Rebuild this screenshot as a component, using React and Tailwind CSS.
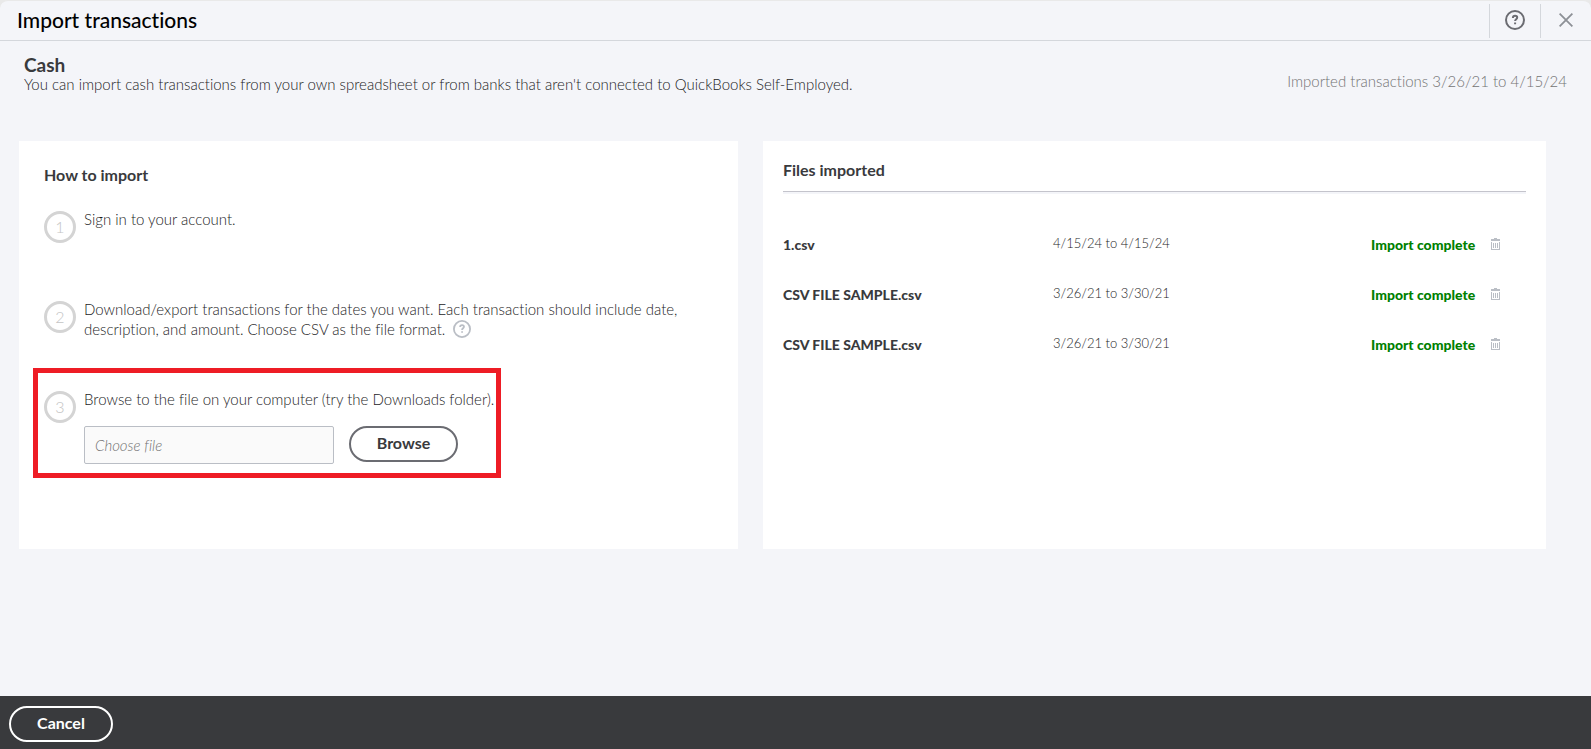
import React, { useRef, useState } from "react";

const importedFiles = [
  { id: 1, name: "1.csv", range: "4/15/24 to 4/15/24" },
  { id: 2, name: "CSV FILE SAMPLE.csv", range: "3/26/21 to 3/30/21" },
  { id: 3, name: "CSV FILE SAMPLE.csv", range: "3/26/21 to 3/30/21" },
];

const HelpIcon = ({ className }) => (
  <svg
    viewBox="0 0 20 20"
    className={className}
    fill="none"
    stroke="currentColor"
    strokeWidth="2"
    aria-hidden="true"
  >
    <circle cx="10" cy="10" r="9" />
    <path d="M7.9 7.9c0-1.3.9-2.1 2.2-2.1s2.1.7 2.1 1.8c0 1.6-2.1 1.6-2.1 3.4" />
    <path d="M10.1 12.4v1.9" />
  </svg>
);

const CloseIcon = () => (
  <svg
    viewBox="0 0 14 14"
    className="h-3.5 w-3.5"
    fill="none"
    stroke="currentColor"
    strokeWidth="1.8"
    aria-hidden="true"
  >
    <path d="M.6.6l12.8 12.8M13.4.6L.6 13.4" />
  </svg>
);

const TrashIcon = () => (
  <svg viewBox="0 0 9 12" className="h-3 w-[9px]" fill="currentColor" aria-hidden="true">
    <path d="M3 0h3v1h3v2H0V1h3z" />
    <path d="M0 4h1v7h7V4h1v8H0zM2 5h1v5H2zM4 5h1v5H4zM6 5h1v5H6z" />
  </svg>
);

const Step = ({ number, children }) => (
  <li className="relative flex min-h-[90px] items-start gap-2">
    <span className="mt-0.5 flex h-8 w-8 shrink-0 items-center justify-center rounded-full border-3 border-[#d4d4d4] text-base font-light text-[#c4c4c4]">
      {number}
    </span>
    <div className="flex-1 text-[15px] leading-5 font-light text-[#1c1c1e]">{children}</div>
  </li>
);

const App = () => {
  const fileRef = useRef(null);
  const [fileName, setFileName] = useState("");

  return (
    <div className="bg-[#e9e9e9] font-['Lato',sans-serif] text-[#393a3d] [font-variant-ligatures:none]">
      <div className="flex min-h-screen flex-col overflow-hidden rounded-t-lg border-t border-[#e9e9e9] bg-[#f4f5f9]">
        <header className="flex h-10 items-start justify-between border-b border-[#d4d7dc] pt-[3px] pl-[17px]">
          <h1 className="text-[21px] leading-8 font-medium text-black">Import transactions</h1>
          <div className="flex h-[34px]">
            <button
              aria-label="Help"
              className="flex w-[51px] items-center justify-center border-l border-[#d4d7dc] pb-0.5 text-[#6b6c72]"
            >
              <HelpIcon className="h-5 w-5" />
            </button>
            <button
              aria-label="Close"
              className="flex w-[51px] items-center justify-center border-l border-[#d4d7dc] pb-0.5 text-[#8d9096]"
            >
              <CloseIcon />
            </button>
          </div>
        </header>

        <main className="flex-1">
          <div className="flex items-end justify-between gap-6 px-6 pt-[14px]">
            <div>
              <h2 className="text-[19px] leading-5 font-bold">Cash</h2>
              <p className="text-[15px] leading-[18px] font-light text-[#1c1c1e]">
                You can import cash transactions from your own spreadsheet or from banks that
                aren't connected to QuickBooks Self-Employed.
              </p>
            </div>
            <p className="text-[15px] leading-6 font-light text-[#737373]">
              Imported transactions 3/26/21 to 4/15/24
            </p>
          </div>

          <div className="grid grid-cols-[719fr_783fr] gap-[25px] pt-12 pr-[45px] pb-8 pl-[19px]">
            <section className="min-h-[408px] bg-white px-[25px] pt-[22px]">
              <h3 className="text-base leading-6 font-bold">How to import</h3>
              <ol className="pt-[22px]">
                <Step number={1}>Sign in to your account.</Step>
                <Step number={2}>
                  <p className="max-w-[600px]">
                    Download/export transactions for the dates you want. Each transaction should
                    include date, description, and amount. Choose CSV as the file format.
                    <button
                      aria-label="About the CSV format"
                      className="ml-2 inline-block align-text-bottom text-[#babec5]"
                    >
                      <HelpIcon className="h-[18px] w-[18px]" />
                    </button>
                  </p>
                </Step>
                <Step number={3}>
                  <div className="pointer-events-none absolute -top-[21px] -left-[11px] h-[110px] w-[468px] border-5 border-[#ee1c25]" />
                  <label htmlFor="file-name">
                    Browse to the file on your computer (try the Downloads folder).
                  </label>
                  <div className="flex items-start gap-[15px] pt-[17px]">
                    <input
                      id="file-name"
                      type="text"
                      readOnly
                      value={fileName}
                      placeholder="Choose file"
                      className="h-[38px] w-[250px] rounded-xs border border-[#babec5] bg-[#fafafa] px-2.5 text-[15px] placeholder:text-[#737373] placeholder:italic"
                    />
                    <input
                      ref={fileRef}
                      type="file"
                      accept=".csv"
                      aria-label="CSV file"
                      className="hidden"
                      onChange={(e) => setFileName(e.target.files[0]?.name ?? "")}
                    />
                    <button
                      onClick={() => fileRef.current.click()}
                      className="h-9 w-[109px] rounded-full border-2 border-[#6b6c72] pb-0.5 text-base font-bold text-[#393a3d]"
                    >
                      Browse
                    </button>
                  </div>
                </Step>
              </ol>
            </section>

            <section className="bg-white px-5 pt-[17px]">
              <h3 className="border-b border-[#c4c4cc] pb-[9px] text-base leading-6 font-bold shadow-[0_2px_0_#f4f5f9]">
                Files imported
              </h3>
              <table className="mt-7 w-full table-fixed text-left">
                <tbody>
                  {importedFiles.map((file) => (
                    <tr key={file.id} className="h-[50px]">
                      <th scope="row" className="w-[270px] text-sm font-black">
                        {file.name}
                      </th>
                      <td className="pb-0.5 text-[13px] font-light text-[#1c1c1e]">
                        {file.range}
                      </td>
                      <td className="w-[120px] text-sm font-black text-[#008000]">
                        Import complete
                      </td>
                      <td className="w-[35px] pb-0.5">
                        <button
                          aria-label={`Delete ${file.name}`}
                          className="block text-[#babec5]"
                        >
                          <TrashIcon />
                        </button>
                      </td>
                    </tr>
                  ))}
                </tbody>
              </table>
            </section>
          </div>
        </main>

        <footer className="flex h-[53px] items-start bg-[#393a3d] px-[9px] pt-2.5">
          <button className="h-9 w-[104px] rounded-full border-2 border-white pb-0.5 text-base font-bold text-white">
            Cancel
          </button>
        </footer>
      </div>
    </div>
  );
};

export default App;
